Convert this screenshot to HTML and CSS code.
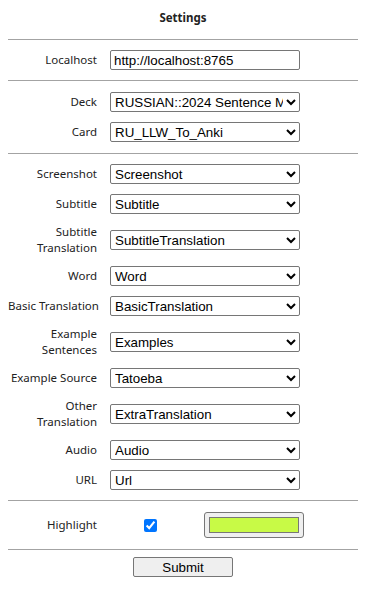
FILE: index.html
```html
<!DOCTYPE html>
<html lang="en">
<head>
    <meta charset="UTF-8">
    <meta name="viewport" content="width=device-width, initial-scale=1.0">
    <title>Settings</title>
    <link rel="stylesheet" href="styles.css">
</head>
<body>
    <div class="title">Settings</div>
    <hr>
    <div class="section">
        <label class="label">Localhost</label>
        <input type="text" class="field" value="http://localhost:8765">
    </div>
    <hr>
    <div class="section deck">
        <label class="label">Deck</label>
        <select class="field"><option>RUSSIAN::2024 Sentence Mining</option></select>
        <label class="label">Card</label>
        <select class="field"><option>RU_LLW_To_Anki</option></select>
    </div>
    <hr>
    <div class="section">
        <label class="label">Screenshot</label>
        <select class="field"><option>Screenshot</option></select>
        <label class="label">Subtitle</label>
        <select class="field"><option>Subtitle</option></select>
        <label class="label">Subtitle<br>Translation</label>
        <select class="field"><option>SubtitleTranslation</option></select>
        <label class="label">Word</label>
        <select class="field"><option>Word</option></select>
        <label class="label">Basic Translation</label>
        <select class="field"><option>BasicTranslation</option></select>
        <label class="label">Example<br>Sentences</label>
        <select class="field"><option>Examples</option></select>
        <label class="label">Example Source</label>
        <select class="field"><option>Tatoeba</option></select>
        <label class="label">Other<br>Translation</label>
        <select class="field"><option>ExtraTranslation</option></select>
        <label class="label">Audio</label>
        <select class="field"><option>Audio</option></select>
        <label class="label">URL</label>
        <select class="field"><option>Url</option></select>
    </div>
    <hr>
    <div class="highlight-row">
        <label class="label">Highlight</label>
        <input type="checkbox" class="check" checked>
        <input type="color" class="color" value="#c8fa46">
    </div>
    <hr>
    <div class="submit-row">
        <button class="submit">Submit</button>
    </div>
</body>
</html>
```

FILE: styles.css
```css
body {
    margin: 8px;
    font-family: "Noto Sans", "Open Sans", sans-serif;
    font-size: 11.5px;
    color: #222;
    background: #fff;
}
.title {
    text-align: center;
    font-weight: bold;
    line-height: 16px;
    padding: 2px 0;
    margin-bottom: 11px;
}
hr {
    margin: 0;
    border: 0;
    border-top: 1px solid #a3a3a3;
}
.section {
    display: grid;
    grid-template-columns: 89px 190px;
    column-gap: 13px;
    row-gap: 10px;
    align-items: center;
    padding: 10px 0;
}
.section.deck {
    padding: 11px 0;
}
.label {
    text-align: right;
    line-height: 16px;
    white-space: nowrap;
}
.field {
    width: 190px;
    height: 20px;
    box-sizing: border-box;
    margin: 0;
    font-family: "Liberation Sans", Arial, sans-serif;
    font-size: 13.33px;
    color: #000;
    border: 1px solid #767676;
    border-radius: 2px;
    background-color: #fff;
}
input.field {
    padding: 1px 3px;
}
.highlight-row {
    display: flex;
    align-items: center;
    padding: 11px 0;
}
.highlight-row .label {
    width: 89px;
}
.check {
    width: 13px;
    height: 13px;
    margin: 0 0 0 47px;
}
.color {
    width: 100px;
    height: 26px;
    margin: 0 0 0 47px;
    padding: 0;
    box-sizing: border-box;
    border: 1px solid #767676;
    border-radius: 3px;
    background: #efefef;
}
.color::-webkit-color-swatch-wrapper {
    padding: 4px;
}
.color::-webkit-color-swatch {
    border: 1px solid #777;
    border-radius: 0;
}
.submit-row {
    display: flex;
    justify-content: center;
    padding-top: 7px;
}
.submit {
    width: 100px;
    height: 20px;
    padding: 0;
    font-family: "Liberation Sans", Arial, sans-serif;
    font-size: 13.33px;
    color: #000;
    background: #efefef;
    border: 1px solid #767676;
    border-radius: 2px;
}
```
